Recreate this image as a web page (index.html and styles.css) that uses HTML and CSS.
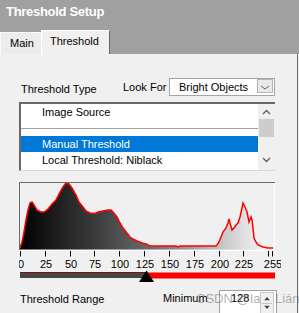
FILE: index.html
```html
<!DOCTYPE html>
<html>
<head>
<meta charset="utf-8">
<link rel="stylesheet" href="styles.css">
</head>
<body>
<div class="header">
  <div class="title">Threshold Setup</div>
  <div class="tabs">
    <div class="tab tab-main">Main</div>
    <div class="tab tab-active">Threshold</div>
  </div>
</div>
<div class="panel">
  <div class="row-type">
    <span class="lbl-type">Threshold Type</span>
    <span class="lbl-look">Look For</span>
    <div class="combo">
      <span class="combo-text">Bright Objects</span>
      <span class="combo-btn"><svg width="14" height="12" viewBox="0 0 14 12"><path d="M3 6 L7 9 L11 6" fill="none" stroke="#606060" stroke-width="1"/></svg></span>
    </div>
  </div>
  <div class="listbox">
    <div class="items">
      <div class="item">Image Source</div>
      <div class="sep"><div class="sep-line"></div></div>
      <div class="item sel">Manual Threshold</div>
      <div class="item">Local Threshold: Niblack</div>
    </div>
    <div class="scroll">
      <div class="sb-up"><svg width="17" height="15" viewBox="0 0 17 15"><path d="M5 10 L8.5 6.5 L12 10" fill="none" stroke="#606060" stroke-width="1.3"/></svg></div>
      <div class="sb-thumb"></div>
      <div class="sb-space"></div>
      <div class="sb-down"><svg width="17" height="16" viewBox="0 0 17 16"><path d="M5 4 L8.5 7.5 L12 4" fill="none" stroke="#606060" stroke-width="1.3"/></svg></div>
    </div>
  </div>
  <svg class="hist" viewBox="19 182 262 101" width="262" height="101">
    <defs>
      <linearGradient id="gr" gradientUnits="userSpaceOnUse" x1="20" y1="0" x2="272" y2="0">
        <stop offset="0" stop-color="#000"/>
        <stop offset="0.32" stop-color="#404040"/>
        <stop offset="0.52" stop-color="#6c6c6c"/>
        <stop offset="0.77" stop-color="#bcbcbc"/>
        <stop offset="0.89" stop-color="#e0e0e0"/>
        <stop offset="1" stop-color="#f8f8f8"/>
      </linearGradient>
    </defs>
    <polygon fill="url(#gr)" points="20,249.5 20,248 22,242 24,232 26,220 28,210 30,203 32,202 34,205 37,210 41,212 44,212 48,209 52,204 56,200 60,192 63,187 66,183 69,184 72,188 76,195 79,202 83,207 86,211 90,213 95,213.5 98,212 103,211 108,210 111,210 113,212 117,217 120,223 123,228 127,233 130,237 133,239 137,241 142,243 146,244 150,246 176,246 178,247 180,246 216,246 217,245 219,242 221,237 223,232 226,228 228,223 229,219 230,223 232,230 234,228 236,225 238,223 240,217 242,208 243,203 245,207 247,212 248,217 249,222 251,217 252,220 253,228 254,238 256,242 258,245 263,247 268,248 273,248 273,249.5"/>
    <polyline fill="none" stroke="#ff0000" stroke-width="1.5" points="20,248 22,242 24,232 26,220 28,210 30,203 32,202 34,205 37,210 41,212 44,212 48,209 52,204 56,200 60,192 63,187 66,183 69,184 72,188 76,195 79,202 83,207 86,211 90,213 95,213.5 98,212 103,211 108,210 111,210 113,212 117,217 120,223 123,228 127,233 130,237 133,239 137,241 142,243 146,244 150,246 176,246 178,247 180,246 216,246 217,245 219,242 221,237 223,232 226,228 228,223 229,219 230,223 232,230 234,228 236,225 238,223 240,217 242,208 243,203 245,207 247,212 248,217 249,222 251,217 252,220 253,228 254,238 256,242 258,245 263,247 268,248 273,248"/>
    <path d="M19.5 250 V182.5 H275" stroke="#696969" fill="none"/>
    <path d="M274.5 183 V250.5 H20" stroke="#ffffff" fill="none"/>
    <g stroke="#000" stroke-width="1">
      <path d="M20.5 251 V256.5 M45.5 251 V256.5 M70.5 251 V256.5 M94.5 251 V256.5 M119.5 251 V256.5 M144.5 251 V256.5 M169.5 251 V256.5 M194.5 251 V256.5 M219.5 251 V256.5 M243.5 251 V256.5 M268.5 251 V256.5 M272.5 251 V256.5"/>
    </g>
    <g class="axis" text-anchor="middle">
      <text x="21" y="267.5">0</text>
      <text x="46" y="267.5">25</text>
      <text x="71" y="267.5">50</text>
      <text x="95" y="267.5">75</text>
      <text x="120" y="267.5">100</text>
      <text x="145" y="267.5">125</text>
      <text x="170" y="267.5">150</text>
      <text x="195" y="267.5">175</text>
      <text x="220" y="267.5">200</text>
      <text x="244" y="267.5">225</text>
      <text x="273" y="267.5">255</text>
    </g>
    <rect x="20" y="272" width="126" height="1" fill="#7a1010"/>
    <rect x="20" y="273" width="126" height="5" fill="#474747"/>
    <rect x="146" y="272.5" width="129" height="6" fill="#ff0000"/>
    <polygon points="139,282 146.5,270.5 154,282" fill="#000"/>
  </svg>
  <div class="row-range">
    <span class="lbl-range">Threshold Range</span>
    <span class="lbl-min">Minimum</span>
    <div class="spin">
      <span class="spin-val">128</span>
      <span class="spin-btns"><svg width="13" height="22" viewBox="0 0 13 22"><path d="M3.5 7 L6.5 3.5 L9.5 7 Z" fill="#404040"/><path d="M1 10.5 H12" stroke="#c0c0c0"/><path d="M3.5 13 L6.5 16.5 L9.5 13 Z" fill="#404040"/></svg></span>
    </div>
    <span class="wm">CSDN @Ia&nbsp;&nbsp;&nbsp;&nbsp;Lián</span>
  </div>
</div>
</body>
</html>
```

FILE: styles.css
```css
* {
  box-sizing: border-box;
  margin: 0;
  padding: 0;
}

html, body {
  width: 299px;
  height: 313px;
  overflow: hidden;
}

body {
  background: #f0f0f0;
  font-family: "Liberation Sans", Arial, sans-serif;
  font-size: 11px;
  line-height: 13px;
  color: #000;
}

.header {
  height: 54px;
  background: #a0a0a0;
  display: flex;
  flex-direction: column;
}

.title {
  height: 20px;
  padding: 4px 0 0 6px;
  font-size: 13px;
  line-height: 16px;
  font-weight: bold;
  color: #ffffff;
  letter-spacing: -0.3px;
}

.tabs {
  flex: 1;
  display: flex;
  align-items: flex-end;
}

.tab {
  background: #f0f0f0;
  white-space: nowrap;
}

.tab-main {
  width: 41px;
  height: 22px;
  padding: 4px 0 0 9px;
  border-top: 1px solid #fafafa;
  border-left: 1px solid #fafafa;
  background: #ececec;
}

.tab-active {
  width: 69px;
  height: 24px;
  padding: 4px 0 0 8px;
  border-top: 1px solid #ffffff;
  border-left: 1px solid #ffffff;
  border-right: 1px solid #696969;
}

.panel {
  position: relative;
  width: 298px;
  height: 259px;
  border-right: 1px solid #696969;
  padding: 24px 0 0 19px;
}

.row-type {
  display: flex;
  width: 256px;
  height: 18px;
}

.lbl-type {
  width: 104px;
  padding: 5px 0 0 2px;
}

.lbl-look {
  width: 46px;
  padding-top: 3px;
}

.combo {
  width: 106px;
  height: 18px;
  border: 1px solid #a5a5a5;
  background: #ffffff;
  display: flex;
}

.combo-text {
  flex: 1;
  padding: 2px 0 0 9px;
}

.combo-btn {
  width: 16px;
  height: 14px;
  margin-right: 1px;
  border: 1px solid #b4b4b4;
  background: #e9e9e9;
  display: flex;
}

.listbox {
  margin-top: 6px;
  width: 256px;
  height: 69px;
  border-top: 2px solid #696969;
  border-left: 2px solid #696969;
  border-bottom: 1px solid #d8d8d8;
  display: flex;
}

.items {
  width: 237px;
  background: #ffffff;
}

.item {
  height: 16px;
  line-height: 16px;
  padding-left: 21px;
  white-space: nowrap;
}

.item.sel {
  background: #0078d7;
  color: #ffffff;
}

.sep {
  height: 16px;
  padding-top: 8px;
}

.sep-line {
  height: 1px;
  background: #a0a0a0;
}

.scroll {
  width: 17px;
  background: #f0f0f0;
  display: flex;
  flex-direction: column;
}

.sb-up {
  height: 15px;
  display: flex;
}

.sb-thumb {
  height: 18px;
  margin-left: 1px;
  width: 15px;
  background: #cdcdcd;
}

.sb-space {
  flex: 1;
}

.sb-down {
  height: 16px;
  display: flex;
}

.hist {
  display: block;
  margin-top: 11px;
}

.axis {
  font-family: "Liberation Sans", Arial, sans-serif;
  font-size: 11px;
  fill: #000;
}

.row-range {
  position: relative;
  margin-top: 7px;
  display: flex;
  height: 30px;
}

.lbl-range {
  width: 144px;
  padding: 3px 0 0 1px;
}

.lbl-min {
  width: 56px;
  padding-top: 2px;
}

.spin {
  width: 58px;
  height: 26px;
  border: 1px solid #a0a0a0;
  background: #ffffff;
  display: flex;
}

.spin-val {
  flex: 1;
  padding: 1px 0 0 11px;
}

.spin-btns {
  width: 14px;
  margin: 1px 2px 0 0;
  border: 1px solid #c8c8c8;
  background: #f0f0f0;
  display: flex;
}

.wm {
  position: absolute;
  left: 177px;
  top: 1px;
  font-size: 13px;
  line-height: 16px;
  color: rgba(110, 110, 110, 0.55);
  white-space: nowrap;
}
```
